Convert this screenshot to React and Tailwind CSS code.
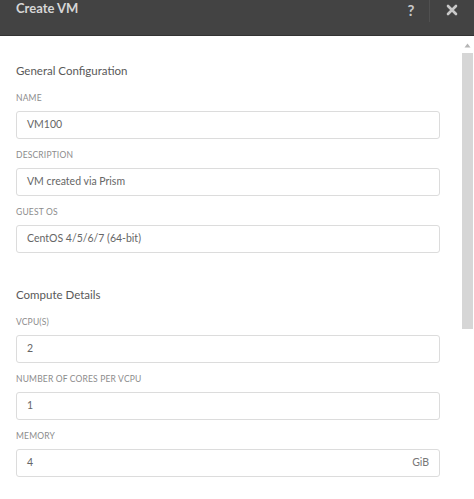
import React from 'react';

const FIELDS_GENERAL = [
  { label: 'Name', value: 'VM100' },
  { label: 'Description', value: 'VM created via Prism' },
  { label: 'Guest OS', value: 'CentOS 4/5/6/7 (64-bit)' },
];

const FIELDS_COMPUTE = [
  { label: 'vCPU(s)', value: '2' },
  { label: 'Number of Cores per vCPU', value: '1' },
  { label: 'Memory', value: '4', unit: 'GiB' },
];

function Field({ label, value, unit }) {
  return (
    <div className="mb-[10px]">
      <label className="block text-[8.5px] leading-[12px] uppercase tracking-[0.02em] text-[#8c8c8c]">
        {label}
      </label>
      <div className="mt-[7px] h-[28px] flex items-center justify-between rounded-[3px] border border-[#dcdcdc] bg-white pl-[10px] pr-[10px] text-[10.5px] text-[#666]">
        <span>{value}</span>
        {unit && <span className="text-[#777]">{unit}</span>}
      </div>
    </div>
  );
}

function Section({ title, fields, className }) {
  return (
    <div className={className}>
      <h3 className="text-[11.5px] leading-[13px] text-[#595959] mb-[15px]">{title}</h3>
      {fields.map((f) => (
        <Field key={f.label} {...f} />
      ))}
    </div>
  );
}

export default function App() {
  return (
    <div
      className="w-[474px] h-[499px] overflow-hidden bg-white flex flex-col"
      style={{ fontFamily: 'Lato, "Open Sans", sans-serif' }}
    >
      <header className="h-[36px] shrink-0 bg-[#434343] border-b border-[#333] flex items-start">
        <h2 className="flex-1 pl-[16px] pt-px text-[13px] leading-[14px] font-bold text-[#d6d6d6]">
          Create VM
        </h2>
        <button className="w-[36px] h-[20px] flex items-center justify-center text-[15px] font-bold text-[#c9c9c9] ml-auto">
          ?
        </button>
        <div className="w-px h-[22px] bg-[#505050]" />
        <button className="w-[44px] h-[20px] flex items-center justify-center text-[#c9c9c9]">
          <svg width="12" height="12" viewBox="0 0 12 12">
            <path d="M2 2L10 10M10 2L2 10" stroke="currentColor" strokeWidth="2.6" strokeLinecap="round" />
          </svg>
        </button>
      </header>

      <div className="flex-1 flex min-h-0">
        <div className="flex-1 pl-[16px] pr-[21px] pt-[28px]">
          <Section title="General Configuration" fields={FIELDS_GENERAL} />
          <Section title="Compute Details" fields={FIELDS_COMPUTE} className="mt-[35px]" />
        </div>
        <div className="w-[13px] shrink-0 flex flex-col items-center pt-[7px]">
          <svg width="7" height="5" viewBox="0 0 7 5" className="text-[#b5b5b5]">
            <path d="M3.5 0.5L6.5 4.5H0.5Z" fill="currentColor" />
          </svg>
          <div className="mt-[5px] w-[11px] h-[276px] bg-[#d6d6d6]" />
        </div>
      </div>
    </div>
  );
}
